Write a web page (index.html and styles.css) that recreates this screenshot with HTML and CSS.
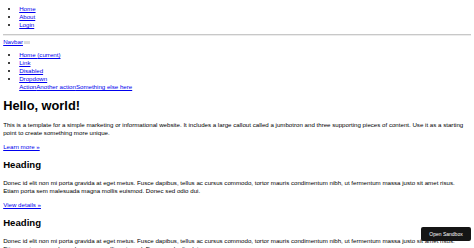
FILE: index.html
```html
<!DOCTYPE html>
<html lang="en">
<head>
<meta charset="utf-8">
<title>Jumbotron Template</title>
<link rel="stylesheet" href="styles.css">
</head>
<body class="page">
  <ul class="list list-top">
    <li><a class="link" href="#">Home</a></li>
    <li><a class="link" href="#">About</a></li>
    <li><a class="link" href="#">Login</a></li>
  </ul>
  <hr class="rule">
  <nav class="navbar">
    <a class="link" href="#">Navbar</a><button class="toggler" type="button"></button>
    <ul class="list list-nav">
      <li><a class="link" href="#">Home <span>(current)</span></a></li>
      <li><a class="link" href="#">Link</a></li>
      <li><a class="link" href="#">Disabled</a></li>
      <li><a class="link" href="#">Dropdown</a>
        <div><a class="link" href="#">Action</a><a class="link" href="#">Another action</a><a class="link" href="#">Something else here</a></div>
      </li>
    </ul>
  </nav>
  <main>
    <h1 class="title">Hello, world!</h1>
    <p class="text">This is a template for a simple marketing or informational website. It includes a large callout called a jumbotron and three supporting pieces of content. Use it as a starting point to create something more unique.</p>
    <p class="text"><a class="link" href="#">Learn more »</a></p>
    <h2 class="heading">Heading</h2>
    <p class="text">Donec id elit non mi porta gravida at eget metus. Fusce dapibus, tellus ac cursus commodo, tortor mauris condimentum nibh, ut fermentum massa justo sit amet risus. Etiam porta sem malesuada magna mollis euismod. Donec sed odio dui.</p>
    <p class="text"><a class="link" href="#">View details »</a></p>
    <h2 class="heading">Heading</h2>
    <p class="text">Donec id elit non mi porta gravida at eget metus. Fusce dapibus, tellus ac cursus commodo, tortor mauris condimentum nibh, ut fermentum massa justo sit amet risus. Etiam porta sem malesuada magna mollis euismod. Donec sed odio dui.</p>
    <p class="text"><a class="link" href="#">View details »</a></p>
  </main>
  <button class="sandbox" type="button">Open Sandbox</button>
</body>
</html>
```
FILE: styles.css
```css
html, body {
  background: #fff;
}
.page {
  margin: 0 3.2px;
  padding-top: 0.1px;
  font-family: "Liberation Sans", Arial, sans-serif;
  font-size: 6.15px;
  line-height: 8px;
  color: #000;
}
.link {
  color: #0000ee;
  text-decoration: underline;
}
.list {
  margin: 0;
  padding-left: 16px;
}
.list-top {
  margin-top: 5px;
}
.list-nav {
  margin-top: 5.5px;
}
.rule {
  margin: 5px 0 1.5px;
  border: 0;
  border-top: 1px solid #c8c8c8;
  border-bottom: 1px solid #ececec;
  height: 0;
}
.toggler {
  display: inline-block;
  width: 6px;
  height: 3px;
  padding: 0;
  margin: 0 0 0 1px;
  border: 0;
  background: #dcdcdc;
  vertical-align: baseline;
}
.title {
  font-size: 12.8px;
  line-height: 15px;
  margin: 6.5px 0 8.5px;
}
.heading {
  font-size: 9.6px;
  line-height: 11px;
  margin: 8px 0 9.5px;
}
.text {
  margin: 5.5px 0;
}
.sandbox {
  position: fixed;
  right: 3px;
  bottom: 7px;
  width: 50px;
  height: 14px;
  padding: 0;
  border: 0;
  border-radius: 2px;
  background: #151515;
  color: #fff;
  font-family: "Liberation Sans", Arial, sans-serif;
  font-size: 5px;
}
```
